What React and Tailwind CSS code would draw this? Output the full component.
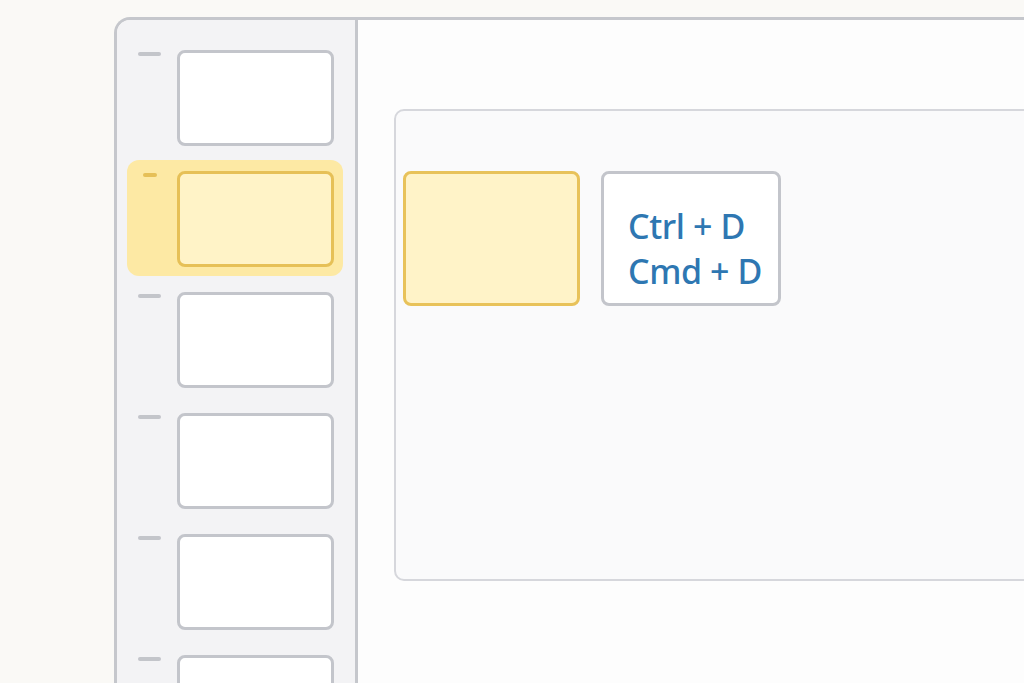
const slides = [1, 2, 3, 4, 5, 6];
const activeSlide = 2;

const SlideRow = ({ active }) => (
  <div
    className={`flex h-[116px] shrink-0 rounded-[12px] pt-[11px] pr-[9px] ${
      active ? 'bg-[#fde9a4] pl-[16px]' : 'pl-[11px]'
    }`}
  >
    <div
      className={`mt-[2px] h-[4px] rounded-full ${
        active ? 'w-[14px] bg-[#e6c058]' : 'w-[23px] bg-[#c3c5ca]'
      }`}
    />
    <div
      className={`ml-auto h-[96px] w-[157px] rounded-[8px] border-[3px] ${
        active ? 'border-[#e6c057] bg-[#fff3c7]' : 'border-[#c3c5cb] bg-white'
      }`}
    />
  </div>
);

export default function App() {
  return (
    <div className="h-[683px] w-[1024px] overflow-hidden bg-[#faf9f6] pl-[114px] pt-[17px]">
      <div className="flex h-[700px] rounded-tl-[16px] border-l-[3px] border-t-[3px] border-[#c5c7cc] overflow-hidden">
        {/* Slide list */}
        <div className="flex w-[241px] shrink-0 flex-col gap-[5px] border-r-[3px] border-[#c5c7cc] bg-[#f3f3f5] pl-[10px] pr-[12px] pt-[19px]">
          {slides.map(s => (
            <SlideRow key={s} active={s === activeSlide} />
          ))}
        </div>

        {/* Editor */}
        <div className="flex-1 bg-[#fdfdfd] pl-[36px] pt-[89px]">
          <div className="h-[472px] w-[680px] rounded-[10px] border-2 border-[#d6d7dc] bg-[#fafafb] pl-[7px] pt-[60px]">
            <div className="flex gap-[21px]">
              <div className="h-[135px] w-[177px] rounded-[8px] border-[3px] border-[#e8c25a] bg-[#fff3c8]" />
              <div
                className="h-[135px] w-[180px] rounded-[8px] border-[3px] border-[#c3c5cb] bg-white pl-[24px] pt-[30px] text-[34px] font-medium leading-[45px] tracking-[-0.4px] text-[#2e77b2]"
                style={{ fontFamily: '"Noto Sans", sans-serif' }}
              >
                <div>Ctrl + D</div>
                <div>Cmd + D</div>
              </div>
            </div>
          </div>
        </div>
      </div>
    </div>
  );
}
